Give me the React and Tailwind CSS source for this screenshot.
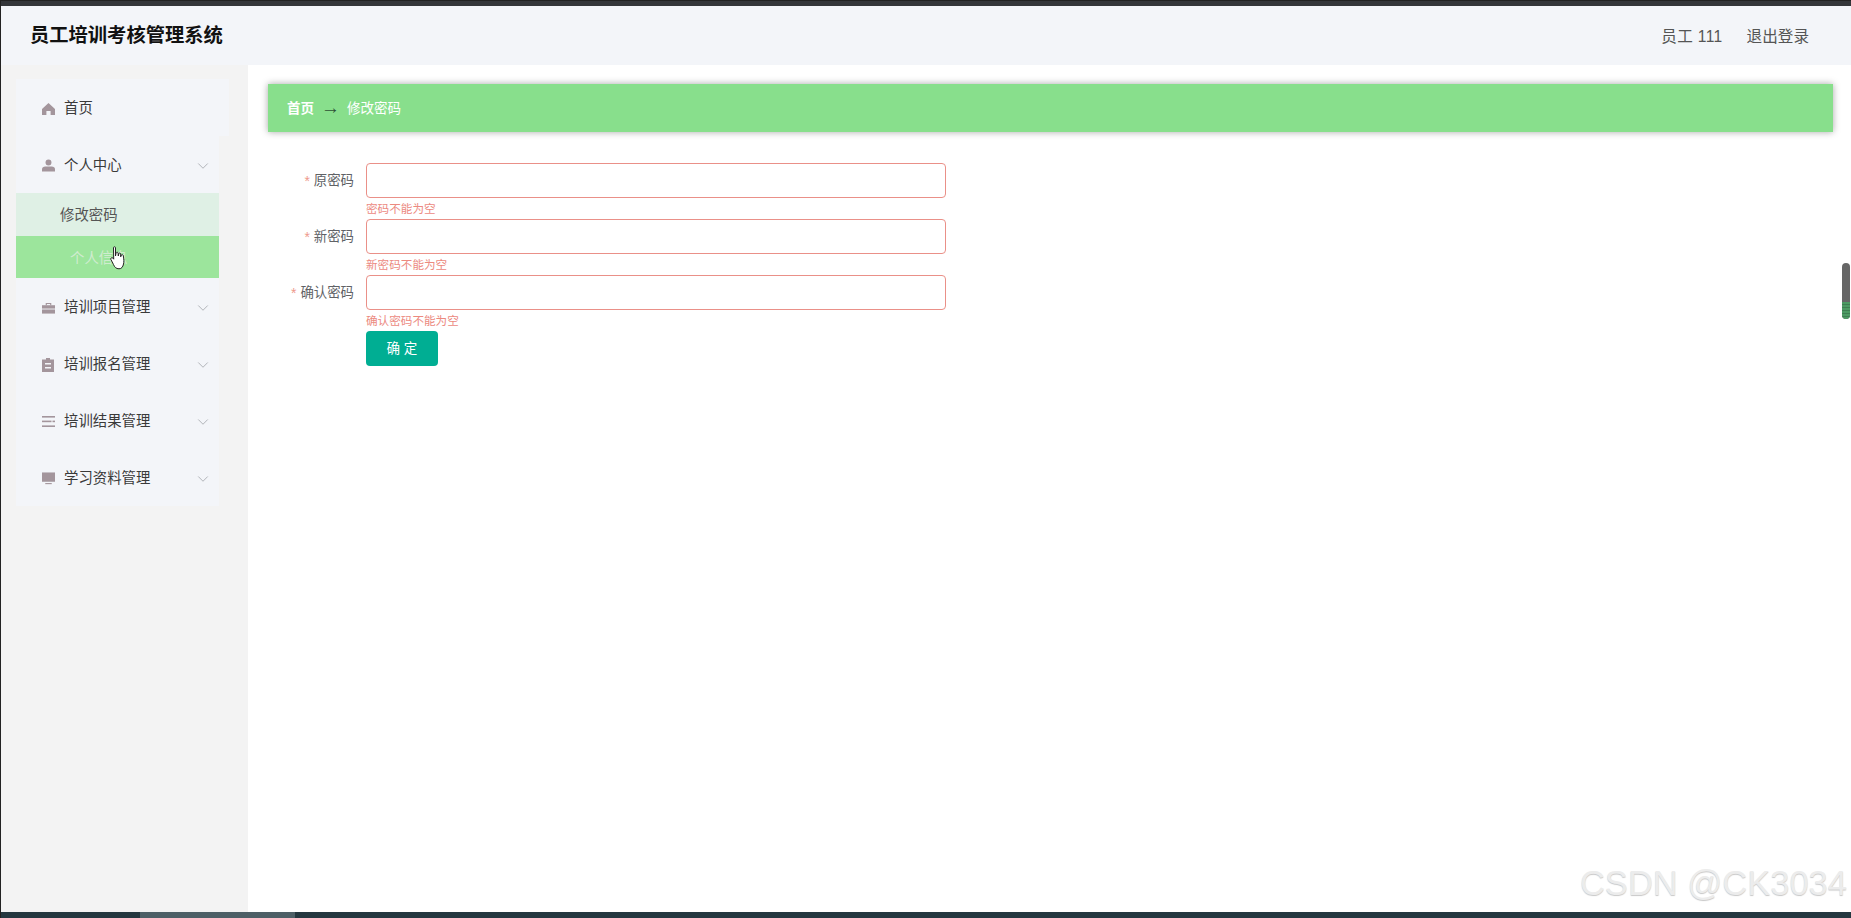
import React from "react";
import { ChevronDown } from "lucide-react";

const Home = () => (
  <svg width="13" height="12" viewBox="0 0 13 12" fill="currentColor"><path d="M6.5 0 L13 6 V12 H8.6 V8 H4.4 V12 H0 V6 Z" /></svg>
);
const User = () => (
  <svg width="13" height="13" viewBox="0 0 14 13" fill="currentColor"><circle cx="7" cy="3.2" r="3.2" /><path d="M0 10.5 C0 8.3 1.6 7.5 3.5 7.5 H10.5 C12.4 7.5 14 8.3 14 10.5 V13 H0 Z" /></svg>
);
const Case = () => (
  <svg width="13" height="12" viewBox="0 0 14 12" fill="currentColor"><path d="M4 3 V0.5 H10 V3 H8.8 V1.7 H5.2 V3 Z" /><rect x="0" y="3" width="14" height="3.6" /><rect x="0" y="7.6" width="14" height="4.4" /></svg>
);
const Clip = () => (
  <svg width="12" height="14" viewBox="0 0 12 14" fill="currentColor"><path fillRule="evenodd" d="M4 0 H8 V1.5 H12 V14 H0 V1.5 H4 Z M3 5 V6.4 H9 V5 Z M3 9 V10.4 H9 V9 Z" /></svg>
);
const Lines = () => (
  <svg width="13" height="11" viewBox="0 0 13 11" fill="currentColor"><rect y="0" width="13" height="1.6" /><rect y="4.6" width="9.5" height="1.6" /><rect x="10.5" y="4.6" width="2.5" height="1.6" /><rect y="9.4" width="13" height="1.6" /></svg>
);
const Screen = () => (
  <svg width="13" height="13" viewBox="0 0 14 13" fill="currentColor"><rect width="14" height="10" /><rect x="3.5" y="11.4" width="7" height="1.2" /></svg>
);

const groups = [
  { label: "培训项目管理", icon: <Case /> },
  { label: "培训报名管理", icon: <Clip /> },
  { label: "培训结果管理", icon: <Lines /> },
  { label: "学习资料管理", icon: <Screen /> },
];

function MenuRow({ icon, label, arrow }) {
  return (
    <div className="flex h-[57px] items-center pt-[2px] text-[14.4px] text-[#3a3a3a]">
      <span className="ml-[25px] mr-[9px] flex w-[14px] justify-center text-[#a3959c]">{icon}</span>
      <span className="flex-1">{label}</span>
      {arrow && <ChevronDown size={18} strokeWidth={0.9} className="mr-[7px] text-[#909399]" />}
    </div>
  );
}

function Field({ label, error }) {
  return (
    <div className="flex h-[56px] items-start">
      <div className="mr-[12px] flex h-[35px] w-[86px] items-center justify-end pt-[2px] text-[13.4px] text-[#606266]">
        <span className="mr-[4px] text-[14px] text-[#ee9a8c]">*</span>
        {label}
      </div>
      <div>
        <div className="h-[35px] w-[580px] rounded-[4px] border border-[#ea9088] bg-white" />
        <div className="h-[21px] pt-[3px] text-[11.6px] leading-[15px] text-[#ec8a7f]">{error}</div>
      </div>
    </div>
  );
}

export default function App() {
  return (
    <div
      className="relative flex h-screen flex-col overflow-hidden border-l border-[#222] bg-white"
      style={{ fontFamily: '"Liberation Sans", "Noto Sans CJK SC", sans-serif' }}
    >
      <div className="h-[6px] shrink-0 border-t-[1px] border-[#222] bg-[#34363a]" />
      <header className="flex h-[59px] shrink-0 items-center justify-between bg-[#f3f5f9] pl-[29px] pr-[42px] pt-[2px]">
        <div className="text-[19.3px] font-bold text-[#111]">员工培训考核管理系统</div>
        <div className="flex items-center gap-[24px] text-[15.6px] text-[#555]">
          <span className="tracking-[0.35px]">员工 111</span>
          <span>退出登录</span>
        </div>
      </header>

      <div className="flex min-h-0 flex-1">
        <aside className="w-[247px] shrink-0 bg-[#f3f3f3] pl-[15px] pt-[14px]">
          <div className="w-[213px] bg-[#f3f5f9]">
            <MenuRow icon={<Home />} label="首页" />
          </div>
          <div className="w-[203px] bg-[#f3f5f9]">
            <MenuRow icon={<User />} label="个人中心" arrow />
            <div className="flex h-[43px] items-center bg-[#dff0e5] pl-[44px] pt-[2px] text-[14.4px] text-[#555]">修改密码</div>
            <div className="relative flex h-[42px] items-center bg-[#9ce59c] pl-[54px] pt-[3px] text-[14.4px] text-[#cfeccf]">
              个人信息
              <svg className="absolute left-[93px] top-[10px]" width="18" height="24" viewBox="0 0 17 24">
                <path
                  d="M4 1.5 C4 .6 6 .6 6 1.5 V10 L6.6 6.8 C7 6 8.4 6 8.6 7 L8.8 10 L9.4 7.5 C9.8 6.8 11 7 11.2 8 V10.8 L11.8 9 C12.4 8.3 13.6 8.6 13.8 9.6 C14.4 13 14.6 16 14 18 C13.4 21 12 22.8 9.5 22.8 C6.5 22.8 5 21 4 18.5 L1.4 13.5 C.8 12.2 2.4 11 3.4 12 L4.2 13.2 Z"
                  fill="#fff"
                  stroke="#222"
                  strokeWidth="1"
                  strokeLinejoin="round"
                />
              </svg>
            </div>
            {groups.map((g) => (
              <MenuRow key={g.label} icon={g.icon} label={g.label} arrow />
            ))}
          </div>
        </aside>

        <main className="min-w-0 flex-1 pl-[20px] pr-[18px] pt-[19px]">
          <div className="flex h-[48px] items-center gap-[7px] bg-[#88df8c] pl-[19px] pt-[2px] text-[13.5px] text-white shadow-[0_0_7px_rgba(0,0,0,0.35)]">
            <span className="font-bold">首页</span>
            <span className="mb-[4px] text-[19px] leading-none text-[#2f4f35]">→</span>
            <span>修改密码</span>
          </div>
          <form className="pt-[31px]">
            <Field label="原密码" error="密码不能为空" />
            <Field label="新密码" error="新密码不能为空" />
            <Field label="确认密码" error="确认密码不能为空" />
            <div className="pl-[98px]">
              <button type="button" className="h-[35px] w-[72px] rounded-[4px] bg-[#00ae93] pt-[2px] text-[13.5px] text-white">
                确 定
              </button>
            </div>
          </form>
        </main>
      </div>

      <div className="h-[6px] shrink-0 bg-[#24373f] pl-[139px]">
        <div className="h-full w-[155px] bg-[#4d5f66]" />
      </div>

      <div className="absolute right-[1px] top-[263px] flex h-[56px] w-[8px] flex-col justify-end overflow-hidden rounded-full bg-[#666]">
        <div className="h-[17px] bg-[repeating-linear-gradient(#4d9a63_0px,#4d9a63_2px,#3f7f52_2px,#3f7f52_3px)]" />
      </div>
      <div
        className="absolute bottom-[16px] right-[4px] text-[34.5px] leading-[38px] text-[#ececec]"
        style={{ textShadow: "0 1px 1px #c8c8c8" }}
      >
        CSDN @CK3034
      </div>
    </div>
  );
}
